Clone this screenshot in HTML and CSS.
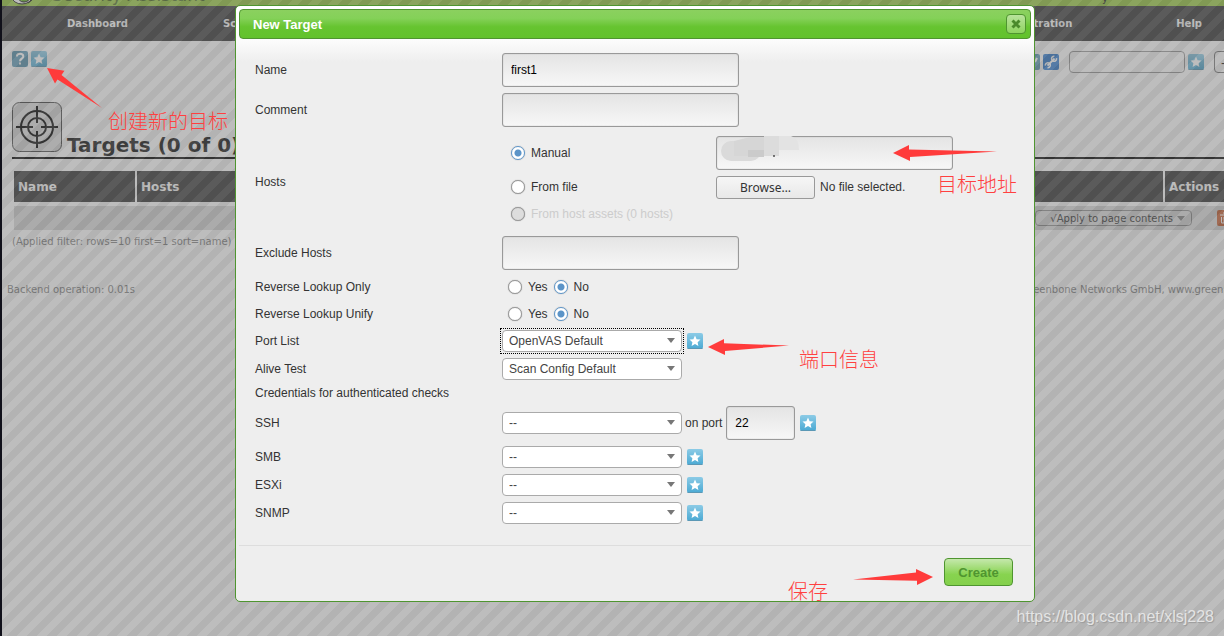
FILE: index.html
```html
<!DOCTYPE html>
<html lang="en">
<head>
    <meta charset="UTF-8">
    <meta name="viewport" content="width=device-width, initial-scale=1.0">
    <title>Targets</title>
    <link rel="stylesheet" href="styles.css">
</head>
<body>
    <svg class="defs" width="0" height="0" aria-hidden="true">
        <linearGradient id="blue" x1="0" y1="0" x2="0" y2="1">
            <stop offset="0" stop-color="#8ccbe6"/>
            <stop offset="1" stop-color="#4aa9d3"/>
        </linearGradient>
        <symbol id="star" viewBox="0 0 16 16">
            <rect x="0" y="0" width="16" height="16" rx="2" fill="url(#blue)"/>
            <path d="M.5 15.5h15" stroke="#5b98b5" stroke-width="1"/>
            <path d="M8 2.6l1.6 3.6 3.9.4-2.9 2.6.8 3.9L8 11.1l-3.4 2 .8-3.9-2.9-2.6 3.9-.4z" fill="#fff"/>
        </symbol>
    </svg>

    <div class="page">
        <header class="banner">
            <svg class="logo" width="30" height="24" viewBox="0 0 30 24" aria-hidden="true">
                <ellipse cx="12" cy="15" rx="10" ry="7" fill="#fff" stroke="#222" stroke-width="1"/>
                <ellipse cx="14" cy="15" rx="6" ry="5" fill="#6cbd2c" stroke="#222" stroke-width="1"/>
                <path d="M18 21q6-3 7-10" fill="none" stroke="#222" stroke-width="1"/>
            </svg>
            <span class="product">Security Assistant</span>
            <span class="session">y</span>
        </header>
        <nav class="menu">
            <div class="menu-left">
                <a href="#">Dashboard</a>
                <a href="#">Scans</a>
            </div>
            <div class="menu-right">
                <a href="#">Administration</a>
                <a href="#">Help</a>
            </div>
        </nav>
        <div class="toolbar">
            <div class="tools">
                <a class="icon" href="#" aria-label="Help">
                    <svg width="16" height="16" viewBox="0 0 16 16">
                        <rect width="16" height="16" rx="2" fill="#5a97b4"/>
                        <path d="M4.8 5.4C4.8 3.6 6.2 2.8 8 2.8s3.3 1 3.3 2.7C11.3 7.600 8 7.800 8 10.200M8 11.600v2" fill="none" stroke="#fff" stroke-width="2"/>
                    </svg>
                </a>
                <a class="icon" href="#" aria-label="New Target"><svg width="16" height="16"><use href="#star"/></svg></a>
            </div>
            <div class="filter">
                <a class="icon" href="#" aria-label="Filter help">
                    <svg width="16" height="16" viewBox="0 0 16 16">
                        <rect width="16" height="16" rx="2" fill="#5a97b4"/>
                        <path d="M13 4l-2 4" stroke="#fff" stroke-width="2"/>
                    </svg>
                </a>
                <a class="icon" href="#" aria-label="Edit filter">
                    <svg width="16" height="16" viewBox="0 0 16 16">
                        <rect width="16" height="16" rx="2" fill="#2f7ad0"/>
                        <path d="M4.500 11.500l7-7" stroke="#fff" stroke-width="2"/>
                        <path d="M13.500 4.200A2.500 2.500 0 1 1 11.400 2.300M2.400 11.700A2.500 2.500 0 1 1 4.500 13.700" fill="none" stroke="#fff" stroke-width="1.500"/>
                    </svg>
                </a>
                <input class="filter-name" type="text" aria-label="Filter name">
                <a class="icon" href="#" aria-label="Save filter"><svg width="16" height="16"><use href="#star"/></svg></a>
                <select class="filter-select" aria-label="Filter"><option>--</option></select>
            </div>
        </div>
        <div class="title">
            <svg width="50" height="50" viewBox="0 0 50 50" aria-hidden="true">
                <rect x=".5" y=".5" width="49" height="49" rx="7" fill="#dedede" stroke="#444"/>
                <g fill="none" stroke="#000" stroke-width="2">
                    <circle cx="25" cy="25" r="16"/>
                    <circle cx="25" cy="25" r="9"/>
                    <path d="M25 4v17M25 29v17M4 25h17M29 25h17"/>
                </g>
            </svg>
            <h1>Targets (0 of 0)</h1>
        </div>
        <table class="targets">
            <thead>
                <tr>
                    <th class="col-name">Name</th>
                    <th>Hosts</th>
                    <th class="col-actions">Actions</th>
                </tr>
            </thead>
            <tbody>
                <tr>
                    <td colspan="3">
                        <div class="bulk">
                            <button class="apply" type="button">√Apply to page contents <span class="caret"></span></button>
                            <svg width="16" height="16" viewBox="0 0 16 16" aria-hidden="true">
                                <rect width="16" height="16" rx="2" fill="#c4592b"/>
                                <path d="M3 5h10M6 3h4M4.500 7v6h7V7M7 7v6M9 7v6" fill="none" stroke="#fff"/>
                            </svg>
                        </div>
                    </td>
                </tr>
            </tbody>
        </table>
        <p class="applied">(Applied filter: rows=10 first=1 sort=name)</p>
        <footer>
            <span>Backend operation: 0.01s</span>
            <span class="copyright">Greenbone Networks GmbH, www.greenbone.net</span>
        </footer>
    </div>

    <div class="overlay"></div>

    <form class="dialog">
        <div class="titlebar">
            <span>New Target</span>
            <button class="close" type="button" aria-label="Close">
                <svg width="12" height="12" viewBox="0 0 12 12"><path d="M2.500 2.500l7 7M9.500 2.500l-7 7" stroke="#4b8a2c" stroke-width="3"/></svg>
            </button>
        </div>
        <div class="content">
            <div class="row tall">
                <label for="name">Name</label>
                <input class="text" id="name" type="text" value="first1">
            </div>
            <div class="row tall">
                <label for="comment">Comment</label>
                <input class="text" id="comment" type="text">
            </div>
            <div class="row hosts">
                <span>Hosts</span>
                <div class="sources">
                    <label class="source"><input type="radio" name="source" checked> Manual</label>
                    <div class="manual">
                        <input class="text" type="text" aria-label="Host addresses">
                        <svg class="smudge" width="80" height="28" viewBox="0 0 80 28" aria-hidden="true">
                            <rect x="1" y="5" width="40" height="20" rx="10" fill="#dadada"/>
                            <path d="M14 5l16-4h18v19H14z" fill="#d6d6d6"/>
                            <path d="M28 14h16v7H28z" fill="#cbcbcb"/>
                            <path d="M44 0h15v20H44z" fill="#dcdcdc"/>
                            <path d="M59 0h12q8 2 8 14H59z" fill="#e3e3e3"/>
                            <path d="M53 20h2" stroke="#000"/>
                        </svg>
                    </div>
                    <label class="source"><input type="radio" name="source"> From file</label>
                    <div class="file">
                        <button class="browse" type="button">Browse…</button>
                        <span>No file selected.</span>
                    </div>
                    <label class="source disabled"><input type="radio" name="source" disabled> From host assets (0 hosts)</label>
                </div>
            </div>
            <div class="row tall">
                <label for="exclude">Exclude Hosts</label>
                <input class="text" id="exclude" type="text">
            </div>
            <div class="row lookup">
                <span>Reverse Lookup Only</span>
                <div class="choice">
                    <label><input type="radio" name="only"> Yes</label>
                    <label><input type="radio" name="only" checked> No</label>
                </div>
            </div>
            <div class="row lookup">
                <span>Reverse Lookup Unify</span>
                <div class="choice">
                    <label><input type="radio" name="unify"> Yes</label>
                    <label><input type="radio" name="unify" checked> No</label>
                </div>
            </div>
            <div class="row">
                <label for="ports">Port List</label>
                <div class="field">
                    <span class="select focused"><select id="ports"><option>OpenVAS Default</option></select></span>
                    <a class="icon" href="#" aria-label="New port list"><svg width="16" height="16"><use href="#star"/></svg></a>
                </div>
            </div>
            <div class="row">
                <label for="alive">Alive Test</label>
                <div class="field">
                    <span class="select"><select id="alive"><option>Scan Config Default</option></select></span>
                </div>
            </div>
            <p class="section">Credentials for authenticated checks</p>
            <div class="row tall">
                <label for="ssh">SSH</label>
                <div class="field">
                    <span class="select"><select id="ssh"><option>--</option></select></span>
                    <label class="on-port" for="port">on port</label>
                    <input class="text port" id="port" type="text" value="22">
                    <a class="icon" href="#" aria-label="New SSH credential"><svg width="16" height="16"><use href="#star"/></svg></a>
                </div>
            </div>
            <div class="row">
                <label for="smb">SMB</label>
                <div class="field">
                    <span class="select"><select id="smb"><option>--</option></select></span>
                    <a class="icon" href="#" aria-label="New SMB credential"><svg width="16" height="16"><use href="#star"/></svg></a>
                </div>
            </div>
            <div class="row">
                <label for="esxi">ESXi</label>
                <div class="field">
                    <span class="select"><select id="esxi"><option>--</option></select></span>
                    <a class="icon" href="#" aria-label="New ESXi credential"><svg width="16" height="16"><use href="#star"/></svg></a>
                </div>
            </div>
            <div class="row">
                <label for="snmp">SNMP</label>
                <div class="field">
                    <span class="select"><select id="snmp"><option>--</option></select></span>
                    <a class="icon" href="#" aria-label="New SNMP credential"><svg width="16" height="16"><use href="#star"/></svg></a>
                </div>
            </div>
        </div>
        <div class="buttons">
            <button class="create" type="submit">Create</button>
        </div>
    </form>

    <!-- hand-drawn notes on top of everything -->
    <div class="notes">
        <svg width="1224" height="636" viewBox="0 0 1224 636" fill="#ff3b3b" aria-hidden="true">
            <path d="M47 68l17.500 2.700-3 4.300L102 108 57.500 79.500 55 83.500z"/>
            <path d="M893 153l16-8v4.500l88 2-87 5.500v4z"/>
            <path d="M708 347l16-8v4.300l65 2.200-64 5.500v4z"/>
            <path d="M933 577l-17-8v3.500l-63 7 64 1.200v4.300z"/>
        </svg>
        <span class="note note-new">创建新的目标</span>
        <span class="note note-address">目标地址</span>
        <span class="note note-ports">端口信息</span>
        <span class="note note-save">保存</span>
    </div>
    <span class="watermark">https://blog.csdn.net/xlsj228</span>
</body>
</html>
```
FILE: styles.css
```css
* {
    box-sizing: border-box;
}

body {
    margin: 0;
    min-height: 100vh;
    position: relative;
    overflow: hidden;
    border-left: 2px solid #10101a;
    background: #fff;
    font-family: "Liberation Sans", Arial, sans-serif;
    font-size: 12px;
    color: #333;
}

.defs {
    position: absolute;
}

.icon,
.icon svg {
    display: block;
}

/* page behind the dialog */
.page {
    overflow: hidden;
    font-family: "DejaVu Sans", sans-serif;
    font-size: 10px;
}

.banner {
    display: flex;
    align-items: flex-end;
    height: 6px;
    overflow: hidden;
    background: #9bcd41;
}

.logo {
    margin-left: 8px;
    flex: none;
}

.product {
    margin-left: 12px;
    font-size: 17px;
    line-height: 22px;
    color: #4a6a20;
}

.session {
    margin: 0 116px 0 auto;
    line-height: 14px;
    color: #222;
}

.menu {
    display: flex;
    justify-content: space-between;
    align-items: center;
    height: 35px;
    padding: 0 22px 0 65px;
    background: #3b3b3b;
    font-weight: bold;
}

.menu-left {
    display: flex;
    gap: 95px;
}

.menu-right {
    display: flex;
    gap: 104px;
}

.menu a {
    color: #fff;
    text-decoration: none;
}

.toolbar {
    display: flex;
    justify-content: space-between;
    height: 61px;
    padding: 10px 0 0 10px;
}

.tools {
    display: flex;
    gap: 3px;
}

.filter {
    display: flex;
    align-items: center;
    gap: 3px;
    height: 22px;
    margin-right: -38px;
}

.filter-name {
    width: 116px;
    height: 22px;
    margin-left: 7px;
    border: 1px solid #999;
    border-radius: 4px;
    background: transparent;
}

.filter-select {
    width: 48px;
    height: 22px;
    margin-left: 7px;
    padding-left: 6px;
    appearance: none;
    border: 1px solid #777;
    border-radius: 4px;
    background: transparent;
    color: #222;
}

.title {
    display: flex;
    align-items: flex-end;
    gap: 5px;
    margin-left: 10px;
    padding-bottom: 5px;
    border-bottom: 2px solid #000;
}

.title svg {
    display: block;
}

.title h1 {
    margin: 0 0 -5px;
    font-size: 20px;
    line-height: 24px;
    color: #111;
}

.targets {
    width: calc(100% + 16px);
    margin: 8px 0 0 10px;
    table-layout: fixed;
    border-spacing: 2px 4px;
}

.targets th {
    height: 31px;
    padding: 0 4px;
    background: #3b3b3b;
    color: #fff;
    font-size: 12px;
    text-align: left;
}

.targets .col-name {
    width: 121px;
}

.targets .col-actions {
    width: 83px;
}

.targets td {
    height: 24px;
    padding: 0;
    background: #dadada;
}

.bulk {
    display: flex;
    justify-content: flex-end;
    align-items: center;
    gap: 25px;
    padding-right: 15px;
}

.apply {
    display: flex;
    align-items: center;
    justify-content: flex-end;
    gap: 4px;
    width: 157px;
    height: 16px;
    padding: 0 6px;
    border: 1px solid #888;
    border-radius: 4px;
    background: transparent;
    font: inherit;
    color: #333;
}

.caret,
.select::after {
    border: 4px solid transparent;
    border-top: 5px solid #777;
    border-bottom: 0;
}

.applied {
    margin: 0 10px;
    line-height: 16px;
    color: #7f7f7f;
}

footer {
    display: flex;
    justify-content: space-between;
    margin: 32px -44px 0 5px;
    line-height: 16px;
    white-space: nowrap;
    color: #7f7f7f;
}

.overlay {
    position: absolute;
    inset: 0;
    background: linear-gradient(135deg, #7b7b7b 25%, #666 25%, #666 50%, #7b7b7b 50%, #7b7b7b 75%, #666 75%) 11px 0 / 20px 20px;
    opacity: 0.5;
}

/* dialog */
.dialog {
    position: absolute;
    top: 5px;
    left: 233px;
    width: 800px;
    max-width: 100%;
    padding: 3px;
    border: 1px solid #4f9530;
    border-radius: 5px;
    background: linear-gradient(#fff 0, #fcfcfc 34px, #eee 56px);
}

.titlebar {
    display: flex;
    justify-content: space-between;
    align-items: center;
    height: 30px;
    padding: 0 4px 0 13px;
    border: 1px solid #4f9530;
    border-radius: 4px;
    background: linear-gradient(#8bd05f 0, #84d158 30%, #66c430 60%, #62c22c);
    color: #fff;
    font-size: 13px;
    font-weight: bold;
}

.close {
    display: flex;
    align-items: center;
    justify-content: center;
    width: 20px;
    height: 20px;
    padding: 0;
    border: 1px solid #4f9530;
    border-radius: 4px;
    background: linear-gradient(#b9e39c, #8ed45f);
}

.content {
    padding: 11px 16px 18px;
}

.row {
    display: grid;
    grid-template-columns: 247px 1fr;
    align-items: center;
    height: 28px;
}

.row.tall {
    height: 40px;
}

.row.hosts {
    height: 103px;
}

.row.lookup {
    height: 27px;
}

.text {
    width: 237px;
    height: 34px;
    padding: 0 8px;
    border: 1px solid #999;
    border-radius: 3px;
    background: linear-gradient(#e4e4e4, #f7f7f7);
    box-shadow: inset 0 0 1px #999;
    font: inherit;
    color: #000;
}

.text.port {
    width: 69px;
}

.sources {
    display: grid;
    grid-template-columns: 214px 1fr;
    grid-template-rows: 40px 28px 26px;
    align-items: center;
    height: 97px;
}

.source,
.choice label {
    display: flex;
    align-items: center;
    gap: 6px;
}

.source {
    padding-left: 9px;
}

.source.disabled {
    color: #ccc;
}

input[type="radio"] {
    appearance: none;
    width: 14px;
    height: 14px;
    margin: 0;
    border: 1px solid #999;
    border-radius: 50%;
    background: #fff;
    box-shadow: 0 0 1px #888;
}

input[type="radio"]:checked {
    border-color: #5b94c8;
    background: radial-gradient(circle, #5b94c8 3px, #fff 4px);
}

input[type="radio"]:disabled {
    background: #ddd;
}

.choice {
    display: flex;
    gap: 6px;
    padding-left: 6px;
}

.manual {
    position: relative;
}

.smudge {
    position: absolute;
    top: 0;
    left: 4px;
}

.file {
    display: flex;
    align-items: center;
    gap: 5px;
}

.browse {
    width: 99px;
    height: 23px;
    padding: 0;
    border: 1px solid #999;
    border-radius: 3px;
    background: linear-gradient(#f6f6f6, #e8e8e8);
    font-family: "Noto Sans", sans-serif;
    font-size: 12px;
    color: #333;
}

.field {
    display: flex;
    align-items: center;
}

.field .icon {
    margin-left: 5px;
}

.select {
    position: relative;
}

.select select {
    display: block;
    width: 180px;
    height: 22px;
    padding: 0 6px;
    appearance: none;
    border: 1px solid #aaa;
    border-radius: 4px;
    background: #fff;
    font: inherit;
    color: #444;
}

.select::after {
    content: "";
    position: absolute;
    top: 8px;
    right: 7px;
}

.select.focused {
    outline: 1px dotted #000;
    outline-offset: 1px;
}

.on-port {
    margin: 0 4px 0 3px;
}

.section {
    margin: 0;
    line-height: 20px;
}

.buttons {
    display: flex;
    justify-content: flex-end;
    padding: 12px 18px;
    border-top: 1px solid #ddd;
}

.create {
    width: 69px;
    height: 28px;
    padding: 0;
    border: 1px solid #4f9530;
    border-radius: 4px;
    background: linear-gradient(#c5e8ac, #87d34f 60%, #84d04c);
    font: bold 13px "Liberation Sans", Arial, sans-serif;
    color: #4f9530;
}

/* notes */
.notes {
    position: absolute;
    top: 0;
    left: -2px;
    pointer-events: none;
}

.notes svg {
    display: block;
}

.note {
    position: absolute;
    font: 300 20px/24px "Noto Sans CJK SC", sans-serif;
    white-space: nowrap;
    color: #ff4040;
}

.note-new {
    top: 109px;
    left: 108px;
}

.note-address {
    top: 172px;
    left: 937px;
}

.note-ports {
    top: 347px;
    left: 799px;
}

.note-save {
    top: 579px;
    left: 788px;
}

.watermark {
    position: absolute;
    right: 10px;
    bottom: 8px;
    font-size: 16px;
    line-height: 22px;
    color: #e4e4e4;
    text-shadow: 1px 1px 1px #999;
}
```
